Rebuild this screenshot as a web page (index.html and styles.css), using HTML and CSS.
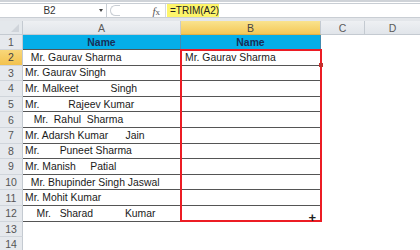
FILE: index.html
```html
<!DOCTYPE html>
<html>
<head>
<meta charset="utf-8">
<link rel="stylesheet" href="styles.css">
</head>
<body>
<div class="topline"></div>
<div class="fbar">
  <div class="namebox"><span class="nb-text">B2</span><span class="nb-arrow"></span></div>
  <div class="fb-mid"><span class="knob"></span><span class="fx"><i>f</i>x</span></div>
  <div class="formula"><span class="fhl">=TRIM(A2)</span></div>
</div>
<div class="strip"></div>
<div class="sheet">
  <div class="corner"><span class="tri"></span></div>
  <div class="ch">A</div>
  <div class="ch selcol">B</div>
  <div class="ch">C</div>
  <div class="ch last">D</div>

  <div class="rh">1</div>
  <div class="c hdr">Name</div>
  <div class="c hdr b">Name</div>
  <div class="e"></div><div class="e"></div>

  <div class="rh selrow">2</div>
  <div class="c">  Mr. Gaurav Sharma</div>
  <div class="c b res">Mr. Gaurav Sharma</div>
  <div class="e"></div><div class="e"></div>

  <div class="rh">3</div>
  <div class="c">Mr. Gaurav Singh</div>
  <div class="c b"></div>
  <div class="e"></div><div class="e"></div>

  <div class="rh">4</div>
  <div class="c">Mr. Malkeet           Singh</div>
  <div class="c b"></div>
  <div class="e"></div><div class="e"></div>

  <div class="rh">5</div>
  <div class="c">Mr.          Rajeev Kumar</div>
  <div class="c b"></div>
  <div class="e"></div><div class="e"></div>

  <div class="rh">6</div>
  <div class="c">   Mr.  Rahul  Sharma</div>
  <div class="c b"></div>
  <div class="e"></div><div class="e"></div>

  <div class="rh">7</div>
  <div class="c">Mr. Adarsh Kumar      Jain</div>
  <div class="c b"></div>
  <div class="e"></div><div class="e"></div>

  <div class="rh">8</div>
  <div class="c">Mr.       Puneet Sharma</div>
  <div class="c b"></div>
  <div class="e"></div><div class="e"></div>

  <div class="rh">9</div>
  <div class="c">Mr. Manish     Patial</div>
  <div class="c b"></div>
  <div class="e"></div><div class="e"></div>

  <div class="rh">10</div>
  <div class="c">  Mr. Bhupinder Singh Jaswal</div>
  <div class="c b"></div>
  <div class="e"></div><div class="e"></div>

  <div class="rh">11</div>
  <div class="c">Mr. Mohit Kumar</div>
  <div class="c b"></div>
  <div class="e"></div><div class="e"></div>

  <div class="rh">12</div>
  <div class="c">    Mr.   Sharad           Kumar</div>
  <div class="c b"></div>
  <div class="e"></div><div class="e"></div>

  <div class="rh">13</div>
  <div class="e"></div><div class="e"></div><div class="e"></div><div class="e"></div>

  <div class="rh">14</div>
  <div class="e"></div><div class="e"></div><div class="e"></div><div class="e"></div>

  <div class="redbox"><span class="handle"></span><span class="cross">+</span></div>
</div>
</body>
</html>
```

FILE: styles.css
```css
html, body {
  margin: 0;
  padding: 0;
  width: 420px;
  height: 250px;
  overflow: hidden;
  background: #ffffff;
  font-family: "Liberation Sans", Arial, sans-serif;
}

.topline {
  height: 2px;
  background: #cfd3d8;
}

.fbar {
  display: flex;
  height: 15px;
  margin-top: 1px;
  background: #ffffff;
  border-top: 1px solid #c9ced4;
  border-bottom: 1px solid #c9ced4;
  box-sizing: border-box;
}

.namebox {
  width: 107px;
  display: flex;
  align-items: center;
  border-right: 1px solid #c9ced4;
  box-sizing: border-box;
}

.nb-text {
  flex: 1;
  text-align: center;
  font-size: 10px;
  color: #333;
}

.nb-arrow {
  width: 0;
  height: 0;
  border-left: 2.5px solid transparent;
  border-right: 2.5px solid transparent;
  border-top: 3px solid #444;
  margin-right: 3px;
}

.fb-mid {
  width: 59px;
  display: flex;
  align-items: center;
  background: #ffffff;
  box-sizing: border-box;
  border-right: 1px solid #d6dadf;
}

.knob {
  width: 10px;
  height: 11px;
  border: 1px solid #c9ced4;
  border-right: none;
  border-radius: 6px 0 0 6px;
  margin-left: 3px;
  box-sizing: border-box;
}

.fx {
  margin-left: auto;
  margin-right: 5px;
  font-family: "Liberation Serif", serif;
  font-size: 9px;
  color: #555;
}

.fx i {
  font-size: 11px;
}

.formula {
  flex: 1;
  display: flex;
  align-items: center;
}

.fhl {
  background: #fdf56b;
  font-size: 10px;
  color: #222;
  padding: 1px 3px;
  height: 11px;
  line-height: 11px;
  margin-left: 1px;
  width: 46px;
}

.strip {
  height: 3px;
  background: #e3e6ea;
}

.sheet {
  display: grid;
  grid-template-columns: 23px 158px 140px 44px 55px;
  grid-template-rows: 14px 15px repeat(13, 15.6px);
  position: relative;
}

.corner {
  background: #e4e8ec;
  border-right: 1px solid #c4cad1;
  border-bottom: 1px solid #c4cad1;
  position: relative;
}

.tri {
  position: absolute;
  right: 3px;
  bottom: 2px;
  width: 0;
  height: 0;
  border-left: 8px solid transparent;
  border-bottom: 8px solid #cfd4da;
}

.ch {
  background: linear-gradient(#eef0f3, #e1e5ea);
  border-right: 1px solid #c4cad1;
  border-bottom: 1px solid #c4cad1;
  font-size: 10.5px;
  color: #5b5b5b;
  display: flex;
  align-items: center;
  justify-content: center;
  box-sizing: border-box;
}

.ch.last {
  border-right: none;
}

.ch.selcol {
  background: linear-gradient(#f9e38e, #f4c857);
  border-bottom: 1px solid #e0b04a;
  color: #444;
}

.rh {
  background: #e6e9ed;
  border-right: 1px solid #c4cad1;
  border-bottom: 1px solid #d0d5db;
  font-size: 10.5px;
  color: #555;
  display: flex;
  align-items: center;
  justify-content: center;
  box-sizing: border-box;
}

.rh.selrow {
  background: linear-gradient(#f8d77a, #f3c24e);
  color: #444;
}

.c {
  border-bottom: 1px solid #555;
  border-right: 1px solid #555;
  font-size: 10.4px;
  color: #1a1a1a;
  white-space: pre;
  padding-left: 2px;
  display: flex;
  align-items: center;
  box-sizing: border-box;
  overflow: hidden;
}

.c.hdr {
  background: #05aee8;
  color: #17305a;
  font-weight: bold;
  justify-content: center;
  padding-left: 0;
  border-right: 1px solid #3f8bb0;
}

.c.res {
  padding-left: 4px;
}

.e {
  background: #ffffff;
}

.redbox {
  position: absolute;
  left: 180px;
  top: 28px;
  width: 142px;
  height: 173px;
  border: 2px solid #ec1c24;
  box-sizing: border-box;
  pointer-events: none;
}

.handle {
  position: absolute;
  right: -3px;
  top: 12px;
  width: 4px;
  height: 4px;
  background: #c0302e;
}

.cross {
  position: absolute;
  right: 4px;
  bottom: -4px;
  font-size: 13px;
  font-weight: bold;
  color: #222;
  line-height: 13px;
}
```
